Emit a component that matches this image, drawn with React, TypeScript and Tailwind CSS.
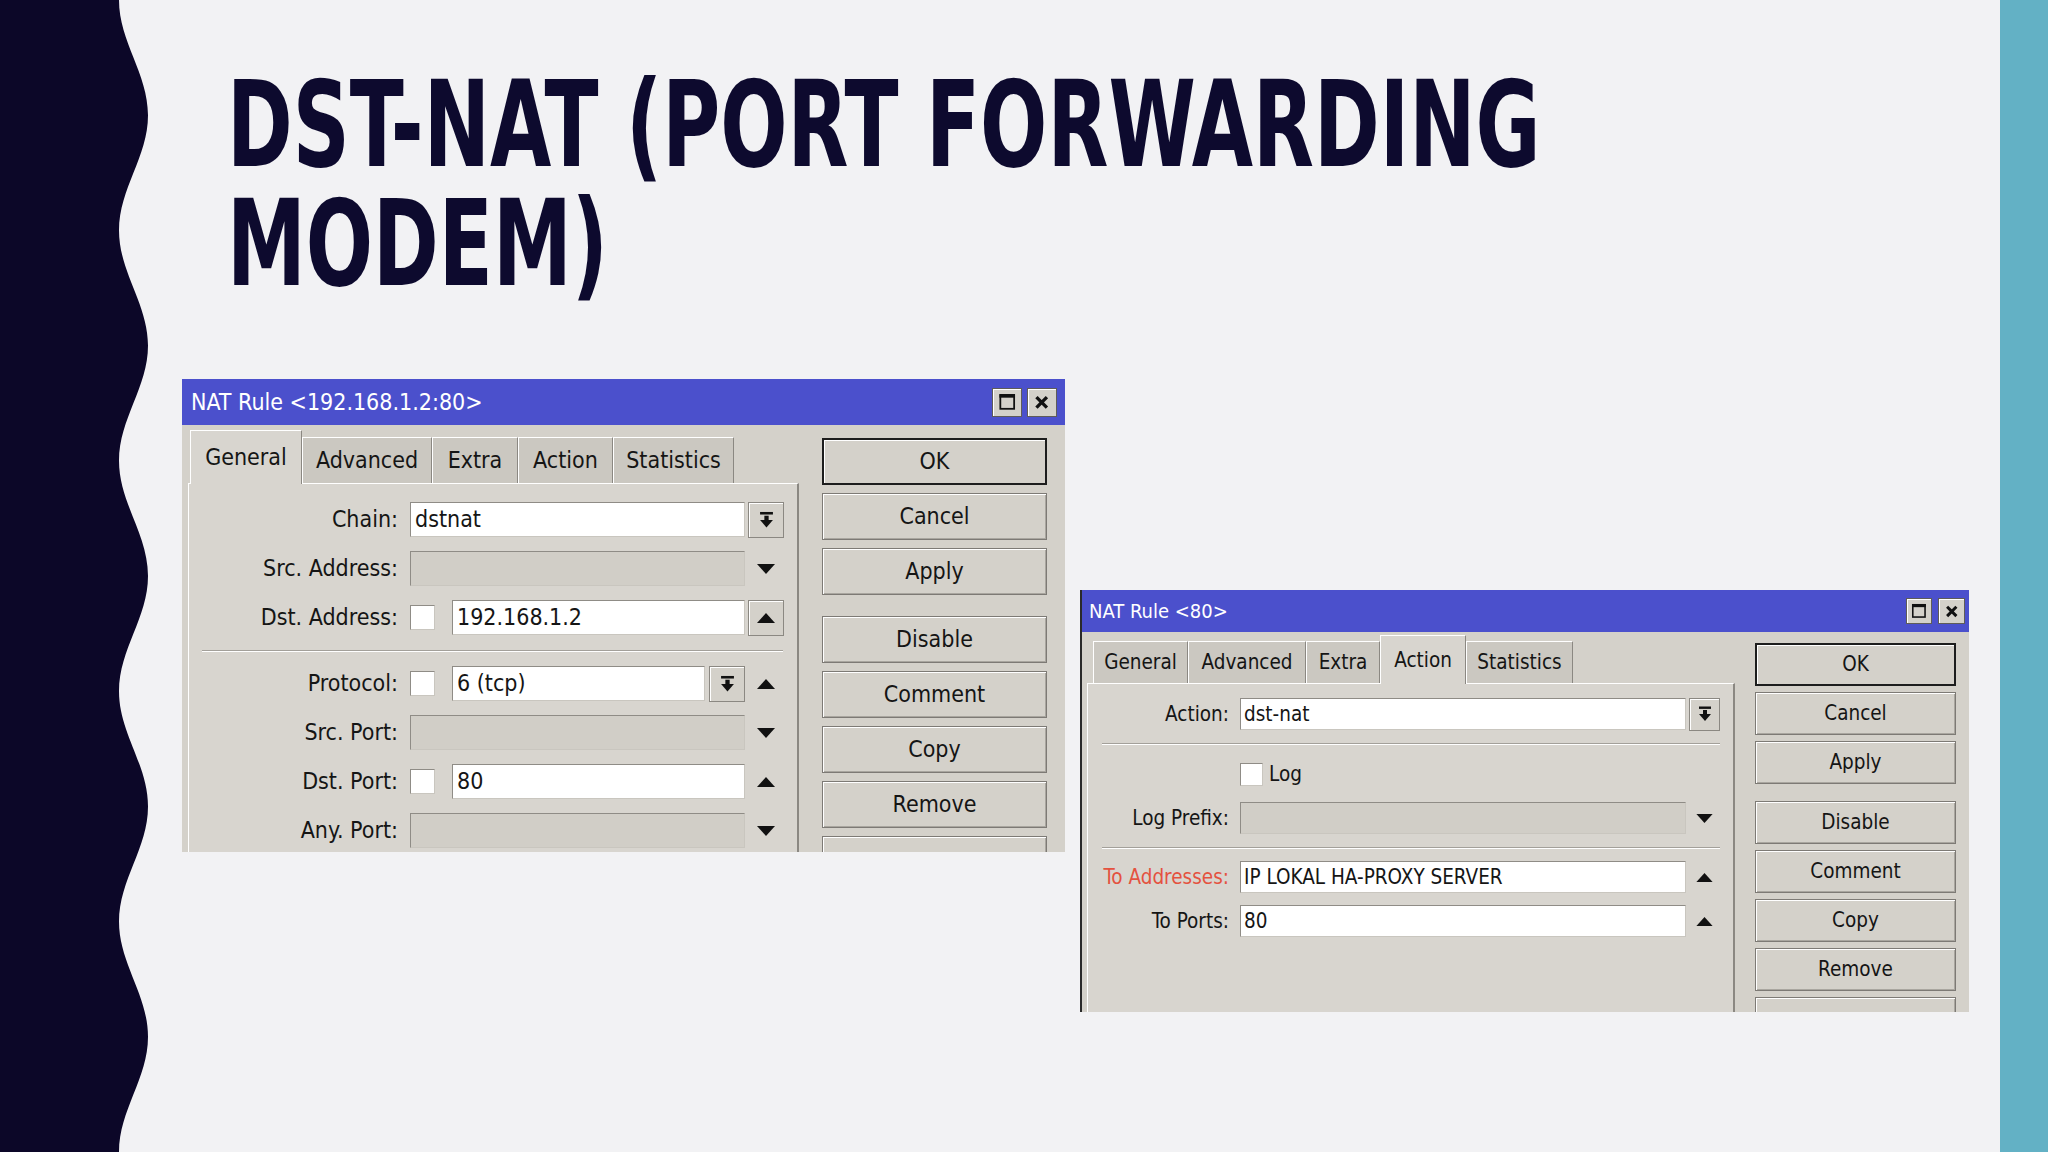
import React from 'react'

// left wavy band: 10 half-periods of a cosine edge between x=119 and x=148
const WAVE = (() => {
  const h = 1152
  const n = 10
  const seg = h / n
  const k = seg * 0.3642
  let d = 'M0 0 L119 0'
  for (let i = 0; i < n; i++) {
    const y0 = i * seg
    const y1 = y0 + seg
    const x0 = i % 2 === 0 ? 119 : 148
    const x1 = i % 2 === 0 ? 148 : 119
    d += ` C${x0} ${y0 + k} ${x1} ${y1 - k} ${x1} ${y1}`
  }
  return d + ' L0 1152 Z'
})()

const ui = "font-['DejaVu_Sans_Condensed','DejaVu_Sans',sans-serif]"

type Cfg = {
  row: string
  label: string
  field: string
  slot: string
  input: string
  check: string
  checkGap: string
  box: string
  icon: string
  tri: string
}

const c1: Cfg = {
  row: 'h-[49px]',
  label: 'w-[209px]',
  field: 'ml-[12px] w-[335px]',
  slot: 'ml-[3px] w-[36px]',
  input: 'h-[35px] pl-[4px]',
  check: 'w-[25px] h-[25px]',
  checkGap: 'ml-[17px]',
  box: 'w-[36px] h-[36px]',
  icon: 'w-[15px] h-[18px]',
  tri: 'w-[18px] h-[10px]',
}

const c2: Cfg = {
  row: 'h-[44px]',
  label: 'w-[141px]',
  field: 'ml-[11px] w-[446px]',
  slot: 'ml-[3px] w-[31px]',
  input: 'h-[32px] pl-[3px]',
  check: 'w-[23px] h-[23px]',
  checkGap: 'ml-[6px]',
  box: 'w-[31px] h-[33px]',
  icon: 'w-[14px] h-[16px]',
  tri: 'w-[17px] h-[9px]',
}

function TitleButton({ kind, box }: { kind: 'max' | 'close'; box: string }) {
  return (
    <div className={`${box} bg-[#d4d1ca] border border-[#5f5c58] shadow-[inset_1px_1px_0_#fff] flex items-center justify-center`}>
      {kind === 'max' ? (
        <svg viewBox="0 0 16 16" className="w-[66%] h-[66%]">
          <rect x="1.8" y="1.8" width="12.4" height="12.4" fill="none" stroke="#111" strokeWidth="1.6" />
          <rect x="1" y="1" width="14" height="3.2" fill="#111" />
        </svg>
      ) : (
        <svg viewBox="0 0 16 16" className="w-[62%] h-[62%]">
          <path d="M3 3 L13 13 M13 3 L3 13" stroke="#111" strokeWidth="3.2" />
        </svg>
      )}
    </div>
  )
}

function Tri({ up, size }: { up?: boolean; size: string }) {
  return (
    <svg viewBox="0 0 18 10" className={size}>
      <polygon points={up ? '0,10 18,10 9,0' : '0,0 18,0 9,10'} fill="#111" />
    </svg>
  )
}

function DropIcon({ size }: { size: string }) {
  return (
    <svg viewBox="0 0 14 16" className={size}>
      <rect x="1" y="0.5" width="12" height="2.4" fill="#111" />
      <rect x="5" y="4" width="4" height="4.5" fill="#111" />
      <polygon points="1,8 13,8 7,15" fill="#111" />
    </svg>
  )
}

function BoxBtn({ c, children }: { c: Cfg; children: React.ReactNode }) {
  return (
    <div className={`${c.box} shrink-0 bg-[#d4d1ca] border border-[#8b8882] shadow-[inset_1px_1px_0_#fff] flex items-center justify-center`}>
      {children}
    </div>
  )
}

function Input({ c, value, disabled, className = '' }: { c: Cfg; value?: string; disabled?: boolean; className?: string }) {
  return (
    <div
      className={`${c.input} ${className} flex items-center border border-[#8f8c86] border-b-[#c9c6bf] border-r-[#c9c6bf] whitespace-nowrap overflow-hidden ${
        disabled ? 'bg-[#d1cec7]' : 'bg-white'
      }`}
    >
      {value}
    </div>
  )
}

function Check({ c }: { c: Cfg }) {
  return <div className={`${c.check} shrink-0 bg-white border border-[#8f8c86] border-b-[#c9c6bf] border-r-[#c9c6bf]`} />
}

function Row({ c, label, red, children, trail }: { c: Cfg; label: string; red?: boolean; children: React.ReactNode; trail?: React.ReactNode }) {
  return (
    <div className={`${c.row} flex items-center`}>
      <div className={`${c.label} shrink-0 text-right whitespace-nowrap ${red ? 'text-[#e4523f]' : ''}`}>{label}</div>
      <div className={`${c.field} shrink-0 flex items-center`}>{children}</div>
      <div className={`${c.slot} shrink-0 flex items-center justify-center`}>{trail}</div>
    </div>
  )
}

function Tabs({ names, widths, active, rowH, tabH, activeH, pl }: { names: string[]; widths: string[]; active: number; rowH: string; tabH: string; activeH: string; pl: string }) {
  return (
    <div className={`${rowH} ${pl} flex items-end shrink-0`}>
      {names.map((n, i) => (
        <div
          key={n}
          className={`${widths[i]} flex items-center justify-center border-t border-l border-white border-r border-r-[#8b8882] ${
            i === active ? `${activeH} bg-[#d8d5cf] relative z-10 -mb-px` : `${tabH} bg-[#cbc8c1]`
          }`}
        >
          {n}
        </div>
      ))}
    </div>
  )
}

function Buttons({ size, gap, split, w }: { size: string; gap: string; split: string; w: string }) {
  const top = ['OK', 'Cancel', 'Apply']
  const rest = ['Disable', 'Comment', 'Copy', 'Remove', '']
  const base = `${size} w-full flex items-center justify-center bg-[#d4d1ca] shrink-0`
  const plain = 'border border-[#7d7a75] shadow-[inset_1px_1px_0_#fff,inset_-1px_-1px_0_#a9a69f]'
  return (
    <div className={`${w} flex flex-col shrink-0`}>
      <div className={`flex flex-col ${gap}`}>
        {top.map((b, i) => (
          <div key={b} className={`${base} ${i === 0 ? 'border-2 border-[#1d1d1d] shadow-[inset_1px_1px_0_#fff]' : plain}`}>
            {b}
          </div>
        ))}
      </div>
      <div className={`flex flex-col ${gap} ${split}`}>
        {rest.map((b, i) => (
          <div key={i} className={`${base} ${plain}`}>
            {b}
          </div>
        ))}
      </div>
    </div>
  )
}

function DialogOne() {
  const c = c1
  return (
    <div className={`${ui} text-[23px] text-[#151515] w-[883px] h-[473px] shrink-0 bg-[#d4d1ca] flex flex-col overflow-hidden`}>
      <div className="h-[46px] shrink-0 bg-[#4b50cc] flex items-center justify-between pl-[9px] pr-[8px]">
        <span className="text-white text-[23px] whitespace-nowrap">NAT Rule &lt;192.168.1.2:80&gt;</span>
        <div className="flex gap-[5px]">
          <TitleButton kind="max" box="w-[30px] h-[29px]" />
          <TitleButton kind="close" box="w-[30px] h-[29px]" />
        </div>
      </div>
      <div className="flex-1 flex pt-[5px] pl-[6px] min-h-0">
        <div className="w-[611px] flex flex-col shrink-0">
          <Tabs
            names={['General', 'Advanced', 'Extra', 'Action', 'Statistics']}
            widths={['w-[112px]', 'w-[130px]', 'w-[86px]', 'w-[95px]', 'w-[121px]']}
            active={0}
            rowH="h-[53px]"
            tabH="h-[46px]"
            activeH="h-[54px]"
            pl="pl-[2px]"
          />
          <div className="flex-1 bg-[#d8d5cf] border-t border-l border-white border-r-2 border-r-[#8b8882] pt-[11px]">
            <Row c={c} label="Chain:" trail={<BoxBtn c={c}><DropIcon size={c.icon} /></BoxBtn>}>
              <Input c={c} value="dstnat" className="w-full" />
            </Row>
            <Row c={c} label="Src. Address:" trail={<Tri size={c.tri} />}>
              <Input c={c} disabled className="w-full" />
            </Row>
            <Row c={c} label="Dst. Address:" trail={<BoxBtn c={c}><Tri up size={c.tri} /></BoxBtn>}>
              <Check c={c} />
              <Input c={c} value="192.168.1.2" className={`${c.checkGap} flex-1`} />
            </Row>
            <div className="h-[17px] flex items-center">
              <div className="ml-[13px] w-[581px] border-t border-[#a3a09a] border-b border-b-white" />
            </div>
            <Row c={c} label="Protocol:" trail={<Tri up size={c.tri} />}>
              <Check c={c} />
              <Input c={c} value="6 (tcp)" className={`${c.checkGap} flex-1`} />
              <div className="ml-[4px]">
                <BoxBtn c={c}><DropIcon size={c.icon} /></BoxBtn>
              </div>
            </Row>
            <Row c={c} label="Src. Port:" trail={<Tri size={c.tri} />}>
              <Input c={c} disabled className="w-full" />
            </Row>
            <Row c={c} label="Dst. Port:" trail={<Tri up size={c.tri} />}>
              <Check c={c} />
              <Input c={c} value="80" className={`${c.checkGap} flex-1`} />
            </Row>
            <Row c={c} label="Any. Port:" trail={<Tri size={c.tri} />}>
              <Input c={c} disabled className="w-full" />
            </Row>
          </div>
        </div>
        <div className="ml-[23px] mt-[8px]">
          <Buttons size="h-[47px]" gap="gap-[8px]" split="mt-[21px]" w="w-[225px]" />
        </div>
      </div>
    </div>
  )
}

function DialogTwo() {
  const c = c2
  return (
    <div className={`${ui} text-[20.5px] text-[#151515] w-[889px] h-[422px] mt-[211px] shrink-0 bg-[#d4d1ca] border-l-2 border-[#2a2a2a] flex flex-col overflow-hidden`}>
      <div className="h-[42px] shrink-0 bg-[#4b50cc] flex items-center justify-between pl-[7px] pr-[4px]">
        <span className="text-white text-[20px] whitespace-nowrap">NAT Rule &lt;80&gt;</span>
        <div className="flex gap-[6px]">
          <TitleButton kind="max" box="w-[26px] h-[26px]" />
          <TitleButton kind="close" box="w-[27px] h-[26px]" />
        </div>
      </div>
      <div className="flex-1 flex pt-[3px] pl-[5px] min-h-0">
        <div className="w-[648px] flex flex-col shrink-0">
          <Tabs
            names={['General', 'Advanced', 'Extra', 'Action', 'Statistics']}
            widths={['w-[95px]', 'w-[118px]', 'w-[74px]', 'w-[86px]', 'w-[107px]']}
            active={3}
            rowH="h-[48px]"
            tabH="h-[42px]"
            activeH="h-[49px]"
            pl="pl-[6px]"
          />
          <div className="flex-1 bg-[#d8d5cf] border-t border-l border-white border-r-2 border-r-[#8b8882] pt-[8px]">
            <Row c={c} label="Action:" trail={<BoxBtn c={c}><DropIcon size={c.icon} /></BoxBtn>}>
              <Input c={c} value="dst-nat" className="w-full" />
            </Row>
            <div className="h-[16px] flex items-center">
              <div className="ml-[14px] w-[618px] border-t border-[#a3a09a] border-b border-b-white" />
            </div>
            <Row c={c} label="">
              <Check c={c} />
              <span className="ml-[6px]">Log</span>
            </Row>
            <Row c={c} label="Log Prefix:" trail={<Tri size={c.tri} />}>
              <Input c={c} disabled className="w-full" />
            </Row>
            <div className="h-[15px] flex items-center">
              <div className="ml-[14px] w-[618px] border-t border-[#a3a09a] border-b border-b-white" />
            </div>
            <Row c={c} label="To Addresses:" red trail={<Tri up size={c.tri} />}>
              <Input c={c} value="IP LOKAL HA-PROXY SERVER" className="w-full" />
            </Row>
            <Row c={c} label="To Ports:" trail={<Tri up size={c.tri} />}>
              <Input c={c} value="80" className="w-full" />
            </Row>
          </div>
        </div>
        <div className="ml-[20px] mt-[8px]">
          <Buttons size="h-[43px]" gap="gap-[6px]" split="mt-[17px]" w="w-[201px]" />
        </div>
      </div>
    </div>
  )
}

export default function App() {
  return (
    <div className="w-[2048px] h-[1152px] flex bg-[#f2f2f4] overflow-hidden">
      <svg width="148" height="1152" viewBox="0 0 148 1152" className="block shrink-0">
        <path d={WAVE} fill="#0c0728" />
      </svg>
      <main className="flex-1 flex flex-col min-w-0">
        <header className="h-[379px] shrink-0 pt-[65px] pl-[79px]">
          <h1 className="origin-top-left scale-y-[1.36] whitespace-nowrap text-[88px] leading-[87.5px] font-bold text-[#0d0a2e] font-['DejaVu_Sans_Condensed','DejaVu_Sans',sans-serif]">
            DST-NAT (PORT FORWARDING
            <br />
            MODEM)
          </h1>
        </header>
        <div className="flex items-start pl-[34px] gap-[15px]">
          <DialogOne />
          <DialogTwo />
        </div>
      </main>
      <div className="w-[48px] shrink-0 bg-[#63b1c5]" />
    </div>
  )
}
